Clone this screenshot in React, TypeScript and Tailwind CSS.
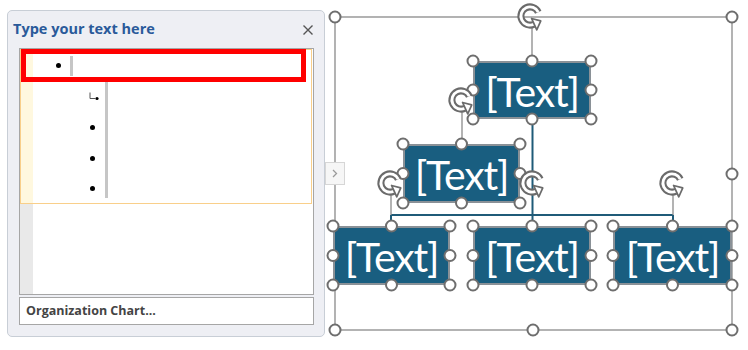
import React from "react";

const OX = 325;

const Handle = ({ x, y }: { x: number; y: number }) => (
  <circle cx={x} cy={y} r={5.5} fill="#ffffff" stroke="#6e6e6e" strokeWidth={2} />
);

const Rot = ({ x, y }: { x: number; y: number }) => {
  const arc = "M6.34 -2.96 A7 7 0 1 0 2.96 6.34";
  return (
    <g transform={`translate(${x} ${y}) scale(1.3)`}>
      <path d={arc} fill="none" stroke="#6b6b6b" strokeWidth={5.4} />
      <path d={arc} fill="none" stroke="#ffffff" strokeWidth={2.2} />
      <path d="M1.2 1.9 L5.2 10.6 L8.3 3.8 Z" fill="#ffffff" stroke="#6b6b6b" strokeWidth={1.3} strokeLinejoin="round" />
    </g>
  );
};

type Box = { x: number; y: number; w: number; h: number };
const boxes: Box[] = [
  { x: 473, y: 61, w: 118, h: 58 },
  { x: 403, y: 144, w: 117, h: 59 },
  { x: 333, y: 226, w: 117, h: 59 },
  { x: 473, y: 226, w: 118, h: 59 },
  { x: 613, y: 226, w: 119, h: 59 },
];

function Bullet() {
  return <div className="w-[5px] h-[5px] rounded-full bg-black" />;
}

export default function App() {
  return (
    <div className="flex w-[748px] h-[350px] bg-white overflow-hidden font-['Open_Sans',sans-serif]">
      {/* Text pane */}
      <div className="ml-[7px] mt-[10px] w-[318px] h-[327px] shrink-0 flex flex-col rounded-[5px] border border-[#c8ced6] bg-[#eeeff4]">
        <div className="flex items-center justify-between h-[37px] pl-[5px] pr-[11px]">
          <span className="font-bold text-[14.5px] text-[#2a5a9a] leading-none">Type your text here</span>
          <svg width="10" height="10" viewBox="0 0 10 10">
            <path d="M0.5 0.5 L9.5 9.5 M9.5 0.5 L0.5 9.5" stroke="#555555" strokeWidth="1.4" />
          </svg>
        </div>
        <div className="ml-[11px] w-[295px] h-[247px] border border-[#a6a6a6] bg-white flex flex-col">
          <div className="relative w-[292px] h-[155px] border border-[#f9cf8a] flex">
            <div className="w-[12px] bg-[#fff8df]" />
            <div className="flex-1 flex flex-col">
              <div className="flex items-center h-[31px]">
                <div className="w-[37px] flex justify-end pr-[9px]">
                  <Bullet />
                </div>
                <div className="w-[3px] h-[20px] bg-[#c6c6c6]" />
              </div>
              <div className="flex h-[122px]">
                <div className="w-[72px] flex flex-col">
                  <div className="h-[31px] flex items-center justify-end pr-[6px]">
                    <svg width="10" height="9" viewBox="0 0 10 9">
                      <path d="M1 0.5 V6.5 H6" fill="none" stroke="#555555" strokeWidth="1" />
                      <circle cx="8" cy="6.5" r="1.6" fill="#000000" />
                    </svg>
                  </div>
                  <div className="h-[31px] flex items-center justify-end pr-[10px]">
                    <Bullet />
                  </div>
                  <div className="h-[30px] flex items-center justify-end pr-[10px]">
                    <Bullet />
                  </div>
                  <div className="h-[30px] flex items-center justify-end pr-[10px]">
                    <Bullet />
                  </div>
                </div>
                <div className="w-[3px] h-[116px] mt-[1px] bg-[#c6c6c6]" />
              </div>
            </div>
            <div className="absolute left-0 top-[-1px] w-[285px] h-[33px] border-[5px] border-[#ff0000]" />
          </div>
          <div className="flex-1 flex">
            <div className="w-[13px] bg-[#e9e9e9]" />
          </div>
        </div>
        <div className="mt-[2px] ml-[11px] w-[295px] h-[28px] border border-[#a6a6a6] bg-white flex items-center pl-[6px]">
          <span className="font-bold text-[12.5px] text-[#444444] leading-none">Organization Chart...</span>
        </div>
      </div>

      {/* Canvas */}
      <div className="relative flex-1 h-[350px]">
        <svg className="absolute inset-0" width="423" height="350">
          <g transform={`translate(${-OX} 0)`}>
            <rect x="335" y="17" width="397" height="313" fill="none" stroke="#8a8a8a" strokeWidth="1.3" />
            <g stroke="#1f5b78" strokeWidth="2" fill="none">
              <path d="M532.5 119 V226" />
              <path d="M391 215 H673" />
              <path d="M391 215 V226" />
              <path d="M673 215 V226" />
              <path d="M520 173 H532" />
            </g>
          </g>
        </svg>
        {boxes.map((b, i) => (
          <div
            key={i}
            className="absolute flex items-center justify-center bg-[#195e80] border-2 border-[#8a9197]"
            style={{ left: b.x - OX, top: b.y, width: b.w, height: b.h }}
          >
            <span className="font-['Lato',sans-serif] text-[41px] tracking-[-1.2px] leading-none text-white mt-[2px]">[Text]</span>
          </div>
        ))}
        <svg className="absolute inset-0 pointer-events-none" width="423" height="350">
          <g transform={`translate(${-OX} 0)`}>
            <g stroke="#8a8a8a" strokeWidth="1.3">
              <path d="M532 28 V61" />
              <path d="M462 111 V144" />
              <path d="M391 194 V215" />
              <path d="M673 194 V215" />
            </g>
            {boxes.map((b, i) => {
              const xs = [b.x, b.x + b.w / 2, b.x + b.w];
              const ys = [b.y, b.y + b.h / 2, b.y + b.h];
              return (
                <g key={i}>
                  {ys.map((y, yi) =>
                    xs.map((x, xi) =>
                      yi === 1 && xi === 1 ? null : <Handle key={`${xi}-${yi}`} x={x} y={y} />
                    )
                  )}
                </g>
              );
            })}
            <Handle x={335} y={17} />
            <Handle x={732} y={17} />
            <Handle x={732} y={174} />
            <Handle x={335} y={330} />
            <Handle x={533} y={330} />
            <Handle x={732} y={330} />
            <Rot x={530} y={16} />
            <Rot x={461} y={100} />
            <Rot x={390} y={183} />
            <Rot x={532} y={183} />
            <Rot x={672} y={183} />
          </g>
        </svg>
        <div className="absolute left-0 top-[162px] w-[20px] h-[23px] border border-[#d6d6d6] bg-[#f6f6f6] flex items-center justify-center">
          <svg width="6" height="9" viewBox="0 0 6 9">
            <path d="M1 1 L4.5 4.5 L1 8" fill="none" stroke="#9a9a9a" strokeWidth="1.3" />
          </svg>
        </div>
      </div>
    </div>
  );
}
